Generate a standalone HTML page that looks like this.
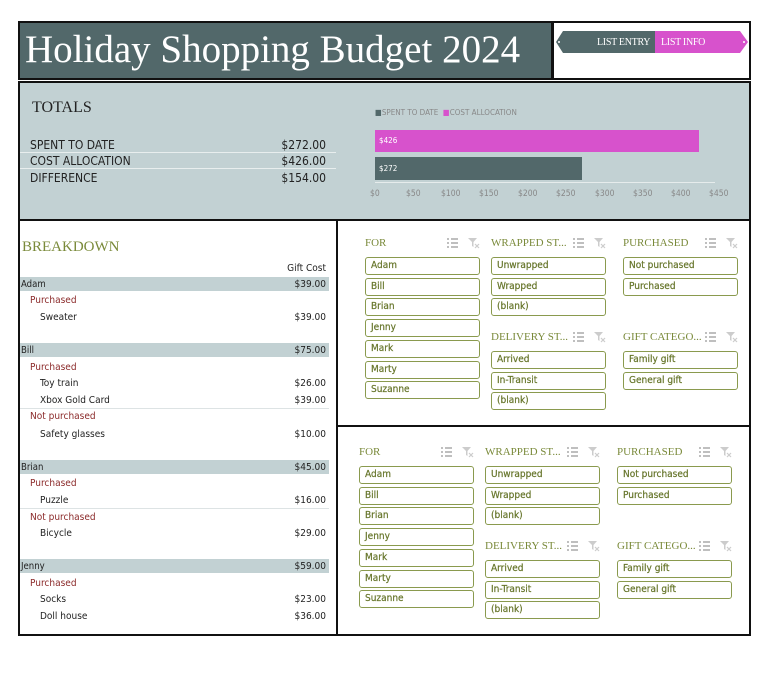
<!DOCTYPE html>
<html><head><meta charset="utf-8"><style>
*{margin:0;padding:0;box-sizing:border-box}
body{width:768px;height:694px;background:#fff;position:relative;overflow:hidden;font-family:"DejaVu Sans Condensed","DejaVu Sans",sans-serif}
.a{position:absolute}
.serif{font-family:"Liberation Serif",serif}
.r{position:absolute;font-size:10px;color:#222;white-space:nowrap;margin-top:1px}
.hd{position:absolute;left:20px;width:309px;height:14px;background:#c2d1d3}
.p{color:#8b2a2a}
.sep{position:absolute;height:1px;background:#dde3e4}
.pan{position:absolute;width:380px;height:180px}
.h{position:absolute;font-family:"Liberation Serif",serif;font-size:11px;color:#7a8a3a;top:0;height:14px;line-height:14px;white-space:nowrap}
.i{position:absolute;width:115px;height:18px;border:1px solid #8a9a4e;border-radius:3px;font-size:10px;color:#66752a;font-weight:500;padding-left:5px;line-height:16px;background:#fff;-webkit-text-stroke:0.2px #66752a}
.ic{position:absolute;top:1px;width:13px;height:12px}
</style></head><body>
<div class="a" style="left:18px;top:21px;width:535px;height:59px;background:#52686a;border:2px solid #111"></div>
<div class="a serif" style="left:25px;top:28px;font-size:39px;color:#fff;line-height:44px;white-space:nowrap">Holiday Shopping Budget 2024</div>
<div class="a" style="left:552px;top:21px;width:199px;height:59px;border:2px solid #111;background:#fff"></div>
<svg class="a" style="left:555px;top:30px" width="195" height="24"><polygon points="8,1 100,1 100,23 8,23 1,12" fill="#52686a"/><polygon points="100,1 185,1 193,12 185,23 100,23" fill="#d752cc"/><circle cx="4" cy="12" r="1" fill="#fff"/><circle cx="189" cy="12" r="1" fill="#fff"/></svg>
<div class="a serif" style="left:597px;top:37px;font-size:10px;color:#fff;letter-spacing:-.3px">LIST ENTRY</div>
<div class="a serif" style="left:661px;top:37px;font-size:10px;color:#fff;letter-spacing:-.3px">LIST INFO</div>

<div class="a" style="left:18px;top:81px;width:733px;height:140px;background:#c2d1d3;border:2px solid #111"></div>
<div class="a serif" style="left:32px;top:99px;font-size:16px;color:#222">TOTALS</div>
<div class="r" style="left:30px;top:137px;font-size:12px">SPENT TO DATE</div><div class="r" style="right:442px;top:137px;font-size:12px">$272.00</div>
<div class="sep" style="left:20px;top:152px;width:316px;background:#e8eeee"></div>
<div class="r" style="left:30px;top:153px;font-size:12px">COST ALLOCATION</div><div class="r" style="right:442px;top:153px;font-size:12px">$426.00</div>
<div class="sep" style="left:20px;top:168px;width:316px;background:#e8eeee"></div>
<div class="r" style="left:30px;top:170px;font-size:12px">DIFFERENCE</div><div class="r" style="right:442px;top:170px;font-size:12px">$154.00</div>
<div class="r" style="left:375px;top:107px;font-size:8px;color:#888"><span style="color:#52686a">■</span>SPENT TO DATE &nbsp;<span style="color:#d752cc">■</span>COST ALLOCATION</div>
<div class="a" style="left:375px;top:130px;width:324px;height:22px;background:#d752cc"></div>
<div class="r" style="left:379px;top:135px;font-size:8px;color:#fff">$426</div>
<div class="a" style="left:375px;top:157px;width:207px;height:23px;background:#52686a"></div>
<div class="r" style="left:379px;top:163px;font-size:8px;color:#fff">$272</div>
<div class="a" style="left:375px;top:182px;width:340px;height:1px;background:#e6ecec"></div>
<div class="r" style="left:370px;top:188px;font-size:8.5px;color:#888;word-spacing:0">
<span class="a" style="left:0">$0</span><span class="a" style="left:36px">$50</span><span class="a" style="left:71px">$100</span><span class="a" style="left:109px">$150</span><span class="a" style="left:148px">$200</span><span class="a" style="left:186px">$250</span><span class="a" style="left:225px">$300</span><span class="a" style="left:263px">$350</span><span class="a" style="left:301px">$400</span><span class="a" style="left:339px">$450</span></div>

<div class="a" style="left:18px;top:219px;width:733px;height:417px;border:2px solid #111"></div>
<div class="a" style="left:336px;top:219px;width:2px;height:417px;background:#111"></div>
<div class="a" style="left:337px;top:425px;width:414px;height:2px;background:#111"></div>

<div class="a serif" style="left:22px;top:239px;font-size:15px;color:#7a8a3a">BREAKDOWN</div>
<div class="r" style="right:442px;top:262px">Gift Cost</div>
<div class="hd" style="top:277px"></div><div class="r" style="left:21px;top:278px;font-size:9.5px">Adam</div><div class="r" style="right:442px;top:278px">$39.00</div>
<div class="r p" style="left:30px;top:294px">Purchased</div>
<div class="r" style="left:40px;top:311px">Sweater</div><div class="r" style="right:442px;top:311px">$39.00</div>
<div class="hd" style="top:343px"></div><div class="r" style="left:21px;top:344px;font-size:9.5px">Bill</div><div class="r" style="right:442px;top:344px">$75.00</div>
<div class="r p" style="left:30px;top:361px">Purchased</div>
<div class="r" style="left:40px;top:377px">Toy train</div><div class="r" style="right:442px;top:377px">$26.00</div>
<div class="r" style="left:40px;top:394px">Xbox Gold Card</div><div class="r" style="right:442px;top:394px">$39.00</div>
<div class="sep" style="left:20px;top:408px;width:309px"></div>
<div class="r p" style="left:30px;top:410px">Not purchased</div>
<div class="r" style="left:40px;top:428px">Safety glasses</div><div class="r" style="right:442px;top:428px">$10.00</div>
<div class="hd" style="top:460px"></div><div class="r" style="left:21px;top:461px;font-size:9.5px">Brian</div><div class="r" style="right:442px;top:461px">$45.00</div>
<div class="r p" style="left:30px;top:477px">Purchased</div>
<div class="r" style="left:40px;top:494px">Puzzle</div><div class="r" style="right:442px;top:494px">$16.00</div>
<div class="sep" style="left:20px;top:508px;width:309px"></div>
<div class="r p" style="left:30px;top:511px">Not purchased</div>
<div class="r" style="left:40px;top:527px">Bicycle</div><div class="r" style="right:442px;top:527px">$29.00</div>
<div class="hd" style="top:559px"></div><div class="r" style="left:21px;top:560px;font-size:9.5px">Jenny</div><div class="r" style="right:442px;top:560px">$59.00</div>
<div class="r p" style="left:30px;top:577px">Purchased</div>
<div class="r" style="left:40px;top:593px">Socks</div><div class="r" style="right:442px;top:593px">$23.00</div>
<div class="r" style="left:40px;top:610px">Doll house</div><div class="r" style="right:442px;top:610px">$36.00</div>

<svg width="0" height="0" style="position:absolute"><defs>
<symbol id="ms" viewBox="0 0 13 12"><path d="M1 2h2M1 6h2M1 10h2M5 2h7M5 6h7M5 10h7" stroke="#999" stroke-width="1.2"/></symbol>
<symbol id="cf" viewBox="0 0 13 12"><path d="M1 1h9L6.5 5v5L5 9V5z" fill="#ccc"/><path d="M8 7l4 4M12 7l-4 4" stroke="#ccc" stroke-width="1.2"/></symbol>
</defs></svg>

<div class="pan" style="left:365px;top:236px">
<div class="h" style="left:0">FOR</div><svg class="ic" style="left:81px"><use href="#ms"/></svg><svg class="ic" style="left:102px"><use href="#cf"/></svg>
<div class="i" style="left:0;top:21px">Adam</div><div class="i" style="left:0;top:41.7px">Bill</div><div class="i" style="left:0;top:62.4px">Brian</div><div class="i" style="left:0;top:83px">Jenny</div><div class="i" style="left:0;top:104px">Mark</div><div class="i" style="left:0;top:124.5px">Marty</div><div class="i" style="left:0;top:145px">Suzanne</div>
<div class="h" style="left:126px">WRAPPED ST...</div><svg class="ic" style="left:207px"><use href="#ms"/></svg><svg class="ic" style="left:228px"><use href="#cf"/></svg>
<div class="i" style="left:126px;top:21px">Unwrapped</div><div class="i" style="left:126px;top:41.7px">Wrapped</div><div class="i" style="left:126px;top:62.4px">(blank)</div>
<div class="h" style="left:126px;top:94px">DELIVERY ST...</div><svg class="ic" style="left:207px;top:95px"><use href="#ms"/></svg><svg class="ic" style="left:228px;top:95px"><use href="#cf"/></svg>
<div class="i" style="left:126px;top:115px">Arrived</div><div class="i" style="left:126px;top:135.7px">In-Transit</div><div class="i" style="left:126px;top:156.4px">(blank)</div>
<div class="h" style="left:258px">PURCHASED</div><svg class="ic" style="left:339px"><use href="#ms"/></svg><svg class="ic" style="left:360px"><use href="#cf"/></svg>
<div class="i" style="left:258px;top:21px">Not purchased</div><div class="i" style="left:258px;top:41.7px">Purchased</div>
<div class="h" style="left:258px;top:94px">GIFT CATEGO...</div><svg class="ic" style="left:339px;top:95px"><use href="#ms"/></svg><svg class="ic" style="left:360px;top:95px"><use href="#cf"/></svg>
<div class="i" style="left:258px;top:115px">Family gift</div><div class="i" style="left:258px;top:135.7px">General gift</div>
</div>

<div class="pan" style="left:359px;top:445px">
<div class="h" style="left:0">FOR</div><svg class="ic" style="left:81px"><use href="#ms"/></svg><svg class="ic" style="left:102px"><use href="#cf"/></svg>
<div class="i" style="left:0;top:21px">Adam</div><div class="i" style="left:0;top:41.7px">Bill</div><div class="i" style="left:0;top:62.4px">Brian</div><div class="i" style="left:0;top:83px">Jenny</div><div class="i" style="left:0;top:104px">Mark</div><div class="i" style="left:0;top:124.5px">Marty</div><div class="i" style="left:0;top:145px">Suzanne</div>
<div class="h" style="left:126px">WRAPPED ST...</div><svg class="ic" style="left:207px"><use href="#ms"/></svg><svg class="ic" style="left:228px"><use href="#cf"/></svg>
<div class="i" style="left:126px;top:21px">Unwrapped</div><div class="i" style="left:126px;top:41.7px">Wrapped</div><div class="i" style="left:126px;top:62.4px">(blank)</div>
<div class="h" style="left:126px;top:94px">DELIVERY ST...</div><svg class="ic" style="left:207px;top:95px"><use href="#ms"/></svg><svg class="ic" style="left:228px;top:95px"><use href="#cf"/></svg>
<div class="i" style="left:126px;top:115px">Arrived</div><div class="i" style="left:126px;top:135.7px">In-Transit</div><div class="i" style="left:126px;top:156.4px">(blank)</div>
<div class="h" style="left:258px">PURCHASED</div><svg class="ic" style="left:339px"><use href="#ms"/></svg><svg class="ic" style="left:360px"><use href="#cf"/></svg>
<div class="i" style="left:258px;top:21px">Not purchased</div><div class="i" style="left:258px;top:41.7px">Purchased</div>
<div class="h" style="left:258px;top:94px">GIFT CATEGO...</div><svg class="ic" style="left:339px;top:95px"><use href="#ms"/></svg><svg class="ic" style="left:360px;top:95px"><use href="#cf"/></svg>
<div class="i" style="left:258px;top:115px">Family gift</div><div class="i" style="left:258px;top:135.7px">General gift</div>
</div>
</body></html>
